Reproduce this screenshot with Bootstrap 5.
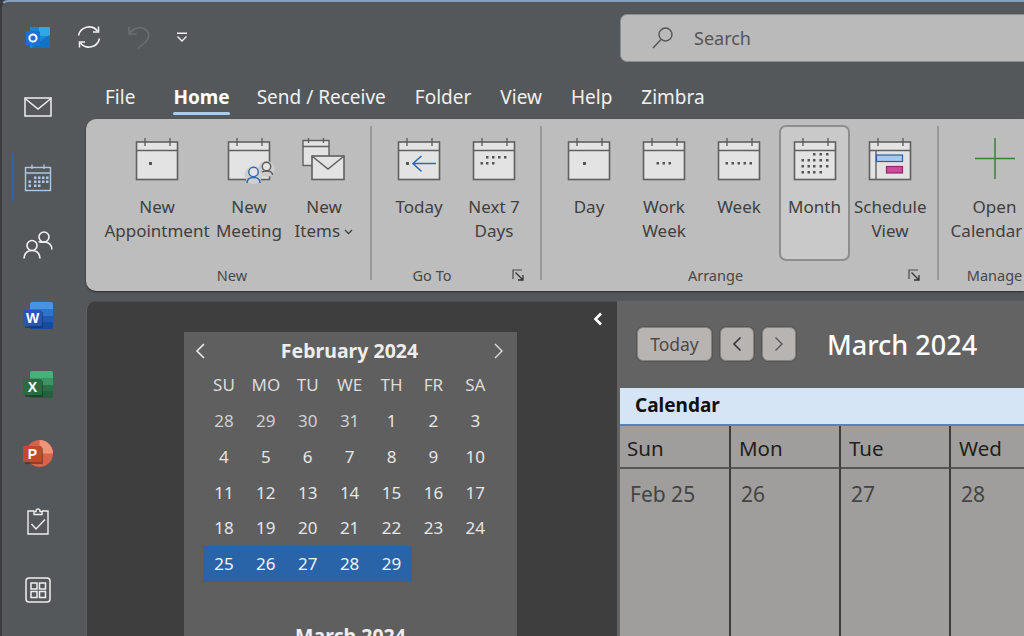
<!doctype html>
<html lang="en"><head><meta charset="utf-8"><title>Outlook Calendar</title>
<link href="https://cdn.jsdelivr.net/npm/bootstrap@5.3.0/dist/css/bootstrap.min.css" rel="stylesheet">
<style>
html,body{height:100%;margin:0;overflow:hidden;background:#3a3c3e}
body{font-family:"Noto Sans","Open Sans",sans-serif;font-size:17px}
.shell{width:1024px;height:636px;background:#55585b;border-top:2px solid #86a0bb;border-left:2px solid #3a3c3e;border-top-left-radius:8px;overflow:hidden}
.titlebar{height:70px}
.qat-row{width:618px;flex:none;padding-left:23px}
.qat-gap1{margin-left:25px}.qat-gap2{margin-left:25px}.qat-gap3{margin-left:26px}
.searchbox{width:420px;flex:none;height:48px;margin-top:2px;background:#bababa;border:1px solid #8b8d8f;border-radius:7px 0 0 7px;padding-left:31px;color:#555;font-size:18px}
.search-txt{margin-left:21px}
.rail{width:84px;flex:none}
.rail-cell{height:69px;position:relative;padding-right:13px}
.active-bar{position:absolute;left:9px;top:12px;width:3px;height:48px;background:#2a64a8;border-radius:2px}
.main-col{min-width:0;width:938px}
.tabs{height:47px;padding-left:19px;gap:29px;color:#f0f0f0;font-size:19px;line-height:25px;padding-top:13px;white-space:nowrap}
.tab-first{margin-right:9px}
.tab-on{font-weight:700;position:relative;color:#fff;margin-right:-2px}
.tab-on::after{content:"";position:absolute;left:0;right:0;top:27px;height:3px;background:#a9cdf0;border-radius:2px}
.ribbon{height:172px;background:#bdbdbd;border-radius:10px 0 0 10px;box-shadow:0 1px 2px #2c2c2c;padding:6px 0 2px 17px;overflow:hidden;color:#404040;line-height:24px}
.rb-btn{height:136px;padding:12px 0 0;border:1px solid transparent;border-radius:7px;color:#404040;font-size:17px;line-height:24px;white-space:nowrap;flex:none;--bs-btn-hover-bg:transparent}
.rb-btn>svg:first-child{display:block;margin:0 auto 13px;overflow:visible}
.rb-caret{display:inline-block;vertical-align:middle}
.rb-on{background:#c9c9c9;border:2px solid #8e8e8e;padding-top:11px;margin:0 3px}
.w108{width:108px}.w76{width:76px}.w74{width:74px}.w71{width:71px}.w93{width:93px}
.rb-label{height:28px;font-size:14.5px;line-height:28px;color:#484848;white-space:nowrap}
.launcher{width:48px;flex:none;padding-right:7px}
.rb-sep{width:2px;flex:none;background:#989898;margin:1px 9px 9px 9px}
.rb-sep-b{margin-right:10px}
.rb-sep-c{margin-left:10px}
.shift-line{display:inline-block;margin-right:16px}
.lower{height:335px;margin-top:10px}
.lower-left{width:531px;flex:none;background:#3e3e3e;border-top-left-radius:9px;padding:30px 0 0 97px;position:relative;border-left:1px solid #5e6164;border-top:1px solid #4c4c4c}
.collapse-btn{position:absolute;right:14px;top:10px}
.mini{width:333px;height:304px;background:#5f5f5f;color:#e6e6e6;overflow:hidden}
.mini-head{height:38px;padding:0 13px 0 11px;font-weight:700;font-size:19.5px;color:#ededed}
.mini-grid{display:grid;grid-template-columns:repeat(7,41.9px);grid-template-rows:33px;grid-auto-rows:35.8px;margin-left:19px;text-align:center;line-height:35.8px;font-size:17px;width:294px}
.mini-dow{font-size:17px;color:#dcdcdc;line-height:30px;height:30px}
.mini-prev{color:#d0d0d0}
.mini-sel{background:#2a64a8;color:#f0f4fa}
.mini-next{margin-top:42px;text-align:center;font-weight:700;font-size:19.5px;color:#ededed;line-height:24px}
.right-pane{background:#636363;min-width:0;flex:1}
.cal-tools{height:87px;padding:26px 0 0 20px;gap:8px;color:#fff}
.tool-btn{height:34px;background:#b8b4b1;border:1px solid #86827f;border-radius:6px;color:#4a4a4a;font-size:17.5px;line-height:31px;padding:0;box-shadow:0 0 0 1px #565656}
.tool-today{width:75px}.tool-nav{width:34px}
.cal-title{font-size:27px;font-weight:500;margin-left:23px;line-height:36px}
.cal-body{margin-left:3px;height:248px;overflow:hidden;width:404px}
.cal-band{height:38px;background:#d5e5f5;border-bottom:2px solid #4a86c8;padding-left:15px;font-weight:700;font-size:19px;line-height:35px;color:#111}
.cal-cols{display:grid;grid-template-columns:111px 110px 110px 110px;background:#9f9e9c;width:441px}
.cal-dow{height:43px;border-right:2px solid #3d3d3d;border-bottom:2px solid #555;padding-left:7px;font-size:20.5px;line-height:45px;color:#1e1e1e}
.cal-dow+.cal-dow{padding-left:8px}
.cal-day{height:170px;border-right:2px solid #3d3d3d;padding:8px 0 0 10px;font-size:21px;line-height:34px;color:#444}
</style></head>
<body>
<svg width="0" height="0" class="position-absolute">
<defs>
<symbol id="calbase" viewBox="0 0 44 44">
<rect x="1.5" y="4" width="41" height="37.5" fill="#e3e3e3" stroke="#606060" stroke-width="1.6"/>
<path d="M1.5 12.500H42.500M10 0V8M35 0V8" stroke="#606060" stroke-width="1.4" fill="none"/>
</symbol>
<symbol id="launch" viewBox="0 0 12 12">
<path d="M10 1H1V10" fill="none" stroke="#4a4a4a" stroke-width="1.2"/><path d="M3.500 3.500L11 11M11 6V11H6" fill="none" stroke="#333" stroke-width="1.3"/>
</symbol>
</defs>
</svg>
<div class="shell">
<div class="titlebar d-flex align-items-center">
  <div class="qat-row d-flex align-items-center">
    <svg width="26" height="24" viewBox="0 0 26 24"><path d="M5 2H25V22H5Z" fill="#1b86d3"/><path d="M14 2H25V11H14Z" fill="#2fa8e6"/><path d="M5 13L15 18L25 10V23H5Z" fill="#1490df"/><path d="M6 22L25 10V23H8Z" fill="#0f6cbd" opacity=".8"/><rect x="1" y="6" width="14" height="14" rx="1.5" fill="#1f6fd6"/><circle cx="8" cy="13" r="3.6" fill="none" stroke="#fff" stroke-width="2"/></svg>
    <svg class="qat-gap1" width="26" height="24" viewBox="0 0 26 24" fill="none" stroke="#f2f2f2" stroke-width="1.5"><path d="M2.500 10.500A10.800 10.800 0 0 1 21.500 6"/><path d="M22.500 1.500V7H17"/><path d="M23.500 13.500A10.800 10.800 0 0 1 4.500 18"/><path d="M3.500 22.500V17H9"/></svg>
    <svg class="qat-gap2" width="23" height="24" viewBox="0 0 23 24" fill="none" stroke="#6c6f72" stroke-width="1.5"><path d="M2 1.500V9H9.500"/><path d="M2 9C6 3 12 1.500 17 3.500C23 7 23 13 18 17.500L11 23.500"/></svg>
    <svg class="qat-gap3" width="12" height="11" viewBox="0 0 12 11" fill="none" stroke="#efefef" stroke-width="1.4"><path d="M1 1.200H11"/><path d="M1.500 4.500L6 9L10.500 4.500"/></svg>
  </div>
  <div class="searchbox d-flex align-items-center">
    <svg width="21" height="22" viewBox="0 0 21 22" fill="none" stroke="#555" stroke-width="1.4"><circle cx="13.500" cy="7.500" r="6.500"/><path d="M9 12.500L1 21"/></svg>
    <span class="search-txt">Search</span>
  </div>
</div>
<div class="d-flex">
  <nav class="rail d-flex flex-column">
    <div class="rail-cell d-flex align-items-center justify-content-center"><svg width="28" height="20" viewBox="0 0 28 20" fill="none" stroke="#eee" stroke-width="1.5"><rect x="1" y="1" width="26" height="18"/><path d="M1 1.500L14 12L27 1.500"/></svg></div>
    <div class="rail-cell d-flex align-items-center justify-content-center"><span class="active-bar"></span><svg class="mt-1" width="28" height="28" viewBox="0 0 28 28"><rect x="1.500" y="3.500" width="25" height="23" fill="none" stroke="#a9c7e8" stroke-width="1.4"/><path d="M1.500 9H26.500M8 0.500V5M20 0.500V5" stroke="#a9c7e8" stroke-width="1.3"/><path d="M10 12.500h2.500v2.500H10zM14 12.500h2.500v2.500H14zM18 12.500h2.500v2.500H18zM22 12.500h2.500v2.500H22zM4.500 16.500h2.500v2.500H4.500zM10 16.500h2.500v2.500H10zM14 16.500h2.500v2.500H14zM18 16.500h2.500v2.500H18zM22 16.500h2.500v2.500H22zM4.500 20.500h2.500v2.500H4.500zM10 20.500h2.500v2.500H10zM14 20.500h2.500v2.500H14z" fill="#a9c7e8"/></svg></div>
    <div class="rail-cell d-flex align-items-center justify-content-center"><svg width="30" height="28" viewBox="0 0 30 28" fill="none" stroke="#f0f0f0" stroke-width="1.6"><circle cx="9" cy="14.500" r="5"/><path d="M1 27.500C1.500 21 5 19.500 9 19.500C13 19.500 16.500 21 17 27.500"/><circle cx="21" cy="6" r="5"/><path d="M15.500 10.500C17 11 20 11.500 21 11C25 11 28.500 13 29 18.500"/></svg></div>
    <div class="rail-cell d-flex align-items-center justify-content-center"><svg class="mt-1" width="30" height="27" viewBox="0 0 30 27"><rect x="7" width="23" height="27" rx="1.500" fill="#1a4a9e"/><path d="M7 1.500A1.500 1.500 0 0 1 8.500 0H28.500A1.500 1.500 0 0 1 30 1.500V7H7Z" fill="#4a93e0"/><rect x="7" y="7" width="23" height="7" fill="#2f74cc"/><rect x="7" y="14" width="23" height="6" fill="#2459b3"/><rect x="2" y="10" width="18" height="16" rx="1" fill="#15306b" opacity=".6"/><rect y="8" width="19" height="16" rx="1.500" fill="#2b55b5"/><text x="9.500" y="21" text-anchor="middle" font-family="Liberation Sans" font-weight="700" font-size="14" fill="#fff">W</text></svg></div>
    <div class="rail-cell d-flex align-items-center justify-content-center"><svg class="mt-1" width="30" height="27" viewBox="0 0 30 27"><rect x="7" width="23" height="27" rx="1.500" fill="#275e3f"/><path d="M7 1.500A1.500 1.500 0 0 1 8.500 0H28.500A1.500 1.500 0 0 1 30 1.500V7H7Z" fill="#45b27a"/><rect x="7" y="7" width="23" height="7" fill="#3f9265"/><rect x="7" y="14" width="23" height="6" fill="#2e6f48"/><rect x="2" y="10" width="18" height="16" rx="1" fill="#123820" opacity=".6"/><rect y="8" width="19" height="16" rx="1.500" fill="#2a6b42"/><text x="9.500" y="21" text-anchor="middle" font-family="Liberation Sans" font-weight="700" font-size="14" fill="#fff">X</text></svg></div>
    <div class="rail-cell d-flex align-items-center justify-content-center"><svg class="mt-1" width="30" height="27" viewBox="0 0 30 27"><circle cx="16.500" cy="13.500" r="13.500" fill="#d2654a"/><path d="M16.500 0A13.500 13.500 0 0 1 30 13.500H16.500Z" fill="#ee9478"/><rect x="2" y="8" width="18" height="16" rx="1" fill="#5a1e10" opacity=".55"/><rect y="6" width="19" height="16" rx="1.500" fill="#c2492c"/><text x="9.500" y="19" text-anchor="middle" font-family="Liberation Sans" font-weight="700" font-size="14" fill="#fff">P</text></svg></div>
    <div class="rail-cell d-flex align-items-center justify-content-center"><svg width="22" height="28" viewBox="0 0 22 28" fill="none" stroke="#eee" stroke-width="1.4"><path d="M7 4H1V27H21V4H15"/><path d="M7 7.500V4.500H9C9 1 13 1 13 4.500H15V7.500Z"/><path d="M4.500 17L9 22L18 12.500"/></svg></div>
    <div class="rail-cell d-flex align-items-center justify-content-center"><svg width="26" height="26" viewBox="0 0 26 26" fill="none" stroke="#eee" stroke-width="1.5"><rect x="1" y="1" width="24" height="24" rx="3"/><rect x="6" y="6" width="6" height="6"/><rect x="14.500" y="6" width="6" height="6"/><rect x="6" y="14.500" width="6" height="6"/><rect x="14.500" y="14.500" width="6" height="6"/></svg></div>
  </nav>
  <div class="main-col">
    <div class="tabs d-flex"><span class="tab-first">File</span><span class="tab-on">Home</span><span>Send / Receive</span><span>Folder</span><span>View</span><span>Help</span><span>Zimbra</span></div>
    <div class="ribbon d-flex">
      <div class="d-flex flex-column">
        <div class="d-flex">
          <div role="button" class="btn rb-btn w108"><svg width="44" height="44" viewBox="0 0 44 44"><use href="#calbase" width="44" height="44"/><rect x="14" y="24" width="3" height="3" fill="#555"/></svg>New<br>Appointment</div>
          <div role="button" class="btn rb-btn w76"><svg width="44" height="44" viewBox="0 0 44 44"><use href="#calbase" width="44" height="44"/><circle cx="39.500" cy="31" r="8" fill="#cdcdcd"/><circle cx="39.500" cy="28.500" r="4.200" fill="#e3e3e3" stroke="#5c5c5c" stroke-width="1.400"/><path d="M33.500 37C33.500 34 36 33 39.500 33C43 33 45.500 34 45.500 37" fill="none" stroke="#5c5c5c" stroke-width="1.400"/><circle cx="26.500" cy="37" r="9" fill="#cfcfcf"/><circle cx="26.500" cy="34" r="4.700" fill="#e3e3e3" stroke="#2b6cb8" stroke-width="1.500"/><path d="M20 45C20 41 23 39.500 26.500 39.500C30 39.500 33 41 33 45" fill="none" stroke="#2b6cb8" stroke-width="1.500"/></svg>New<br>Meeting</div>
          <div role="button" class="btn rb-btn w74"><svg width="44" height="44" viewBox="0 0 44 44"><rect x="1" y="2.500" width="26" height="25" fill="#e3e3e3" stroke="#606060" stroke-width="1.400"/><path d="M1 8.500H27M6.500 0V5M21.500 0V5" stroke="#606060" stroke-width="1.300"/><rect x="10" y="18" width="32" height="23.500" fill="#e3e3e3" stroke="#606060" stroke-width="1.600"/><path d="M10.500 18.500L26 31L41.500 18.500" fill="none" stroke="#606060" stroke-width="1.500"/></svg>New<br>Items <svg class="rb-caret" width="9" height="6" viewBox="0 0 9 6" fill="none" stroke="#404040" stroke-width="1.300"><path d="M1 1L4.500 4.500L8 1"/></svg></div>
        </div>
        <div class="rb-label text-center">New</div>
      </div>
      <div class="rb-sep"></div>
      <div class="d-flex flex-column">
        <div class="d-flex">
          <div role="button" class="btn rb-btn w76"><svg width="44" height="44" viewBox="0 0 44 44"><use href="#calbase" width="44" height="44"/><rect x="9" y="24" width="3" height="3" fill="#555"/><path d="M39 25.500H16M24.500 18L16 25.500L24.500 33.500" fill="none" stroke="#2b6cb8" stroke-width="1.600"/></svg>Today</div>
          <div role="button" class="btn rb-btn w74"><svg width="44" height="44" viewBox="0 0 44 44"><use href="#calbase" width="44" height="44"/><path d="M14 18h2.500v2.500H14zM20 18h2.500v2.500H20zM26 18h2.500v2.500H26zM32 18h2.500v2.500H32zM8.500 24h2.500v2.500H8.500zM14 24h2.500v2.500H14zM20 24h2.500v2.500H20z" fill="#555"/></svg>Next 7<br>Days</div>
        </div>
        <div class="d-flex"><div class="rb-label text-center flex-grow-1">Go To</div><div class="launcher d-flex justify-content-end align-items-center"><svg width="12" height="12"><use href="#launch"/></svg></div></div>
      </div>
      <div class="rb-sep rb-sep-b"></div>
      <div class="d-flex flex-column">
        <div class="d-flex">
          <div role="button" class="btn rb-btn w74"><svg width="44" height="44" viewBox="0 0 44 44"><use href="#calbase" width="44" height="44"/><rect x="16" y="24" width="3" height="3" fill="#555"/></svg>Day</div>
          <div role="button" class="btn rb-btn w76"><svg width="44" height="44" viewBox="0 0 44 44"><use href="#calbase" width="44" height="44"/><path d="M14.500 24h2.500v2.500h-2.500zM20.500 24h2.500v2.500h-2.500zM26.500 24h2.500v2.500h-2.500z" fill="#555"/></svg>Work<br>Week</div>
          <div role="button" class="btn rb-btn w74"><svg width="44" height="44" viewBox="0 0 44 44"><use href="#calbase" width="44" height="44"/><path d="M8.500 24h2.500v2.500h-2.500zM14.500 24h2.500v2.500h-2.500zM20.500 24h2.500v2.500h-2.500zM26.500 24h2.500v2.500h-2.500zM32.500 24h2.500v2.500h-2.500z" fill="#555"/></svg>Week</div>
          <div role="button" class="btn rb-btn rb-on w71"><svg width="44" height="44" viewBox="0 0 44 44"><use href="#calbase" width="44" height="44"/><path d="M20 15h2.500v2.500H20zM26.500 15h2.500v2.500h-2.500zM33 15h2.500v2.500H33zM8.500 21h2.500v2.500H8.500zM14.500 21h2.500v2.500h-2.500zM20 21h2.500v2.500H20zM26.500 21h2.500v2.500h-2.500zM33 21h2.500v2.500H33zM8.500 27h2.500v2.500H8.500zM14.500 27h2.500v2.500h-2.500zM20 27h2.500v2.500H20zM26.500 27h2.500v2.500h-2.500zM33 27h2.500v2.500H33zM8.500 33h2.500v2.500H8.500zM14.500 33h2.500v2.500h-2.500zM20 33h2.500v2.500H20zM26.500 33h2.500v2.500h-2.500z" fill="#555"/></svg>Month</div>
          <div role="button" class="btn rb-btn w74"><svg width="44" height="44" viewBox="0 0 44 44"><use href="#calbase" width="44" height="44"/><path d="M8 12.500V41" stroke="#606060" stroke-width="1.400"/><rect x="8.500" y="17" width="26" height="6.500" fill="#a8c9ec" stroke="#2a5f9e" stroke-width="1.200"/><rect x="18.500" y="28.500" width="16" height="6.500" fill="#d04a9b" stroke="#8d2a6c" stroke-width="1.200"/></svg>Schedule<br>View</div>
        </div>
        <div class="d-flex"><div class="rb-label text-center flex-grow-1">Arrange</div><div class="launcher d-flex justify-content-end align-items-center"><svg width="12" height="12"><use href="#launch"/></svg></div></div>
      </div>
      <div class="rb-sep rb-sep-c"></div>
      <div class="d-flex flex-column">
        <div role="button" class="btn rb-btn w93"><svg width="44" height="44" viewBox="0 0 44 44"><path d="M22 0V41M2 20.500H42" stroke="#3f7f3b" stroke-width="1.500" fill="none"/></svg>Open<br><span class="shift-line">Calendar</span></div>
        <div class="rb-label text-center">Manage</div>
      </div>
    </div>
    <div class="lower d-flex">
      <div class="lower-left">
        <svg class="collapse-btn" width="10" height="14" viewBox="0 0 10 14" fill="none" stroke="#fff" stroke-width="2.600"><path d="M8 1.500L2.500 7L8 12.500"/></svg>
        <div class="mini">
          <div class="mini-head d-flex align-items-center justify-content-between">
            <svg width="10" height="16" viewBox="0 0 10 16" fill="none" stroke="#eee" stroke-width="1.600"><path d="M9 1L2 8L9 15"/></svg>
            <span>February 2024</span>
            <svg width="10" height="16" viewBox="0 0 10 16" fill="none" stroke="#ddd" stroke-width="1.400"><path d="M1 1L8 8L1 15"/></svg>
          </div>
          <div class="mini-grid">
            <div class="mini-dow">SU</div><div class="mini-dow">MO</div><div class="mini-dow">TU</div><div class="mini-dow">WE</div><div class="mini-dow">TH</div><div class="mini-dow">FR</div><div class="mini-dow">SA</div>
            <div class="mini-prev">28</div><div class="mini-prev">29</div><div class="mini-prev">30</div><div class="mini-prev">31</div><div>1</div><div>2</div><div>3</div>
            <div>4</div><div>5</div><div>6</div><div>7</div><div>8</div><div>9</div><div>10</div>
            <div>11</div><div>12</div><div>13</div><div>14</div><div>15</div><div>16</div><div>17</div>
            <div>18</div><div>19</div><div>20</div><div>21</div><div>22</div><div>23</div><div>24</div>
            <div class="mini-sel">25</div><div class="mini-sel">26</div><div class="mini-sel">27</div><div class="mini-sel">28</div><div class="mini-sel">29</div>
          </div>
          <div class="mini-next">March 2024</div>
        </div>
      </div>
      <div class="right-pane">
        <div class="cal-tools d-flex align-items-start">
          <button class="btn tool-btn tool-today">Today</button>
          <button class="btn tool-btn tool-nav d-flex align-items-center justify-content-center"><svg width="10" height="16" viewBox="0 0 10 16" fill="none" stroke="#333" stroke-width="1.600"><path d="M8.500 1.500L2 8L8.500 14.500"/></svg></button>
          <button class="btn tool-btn tool-nav d-flex align-items-center justify-content-center"><svg width="10" height="16" viewBox="0 0 10 16" fill="none" stroke="#555" stroke-width="1.400"><path d="M1.500 1.500L8 8L1.500 14.500"/></svg></button>
          <span class="cal-title">March 2024</span>
        </div>
        <div class="cal-body">
          <div class="cal-band">Calendar</div>
          <div class="cal-cols">
            <div class="cal-dow">Sun</div><div class="cal-dow">Mon</div><div class="cal-dow">Tue</div><div class="cal-dow">Wed</div>
            <div class="cal-day">Feb 25</div><div class="cal-day">26</div><div class="cal-day">27</div><div class="cal-day">28</div>
          </div>
        </div>
      </div>
    </div>
  </div>
</div>
</div>
</body></html>
